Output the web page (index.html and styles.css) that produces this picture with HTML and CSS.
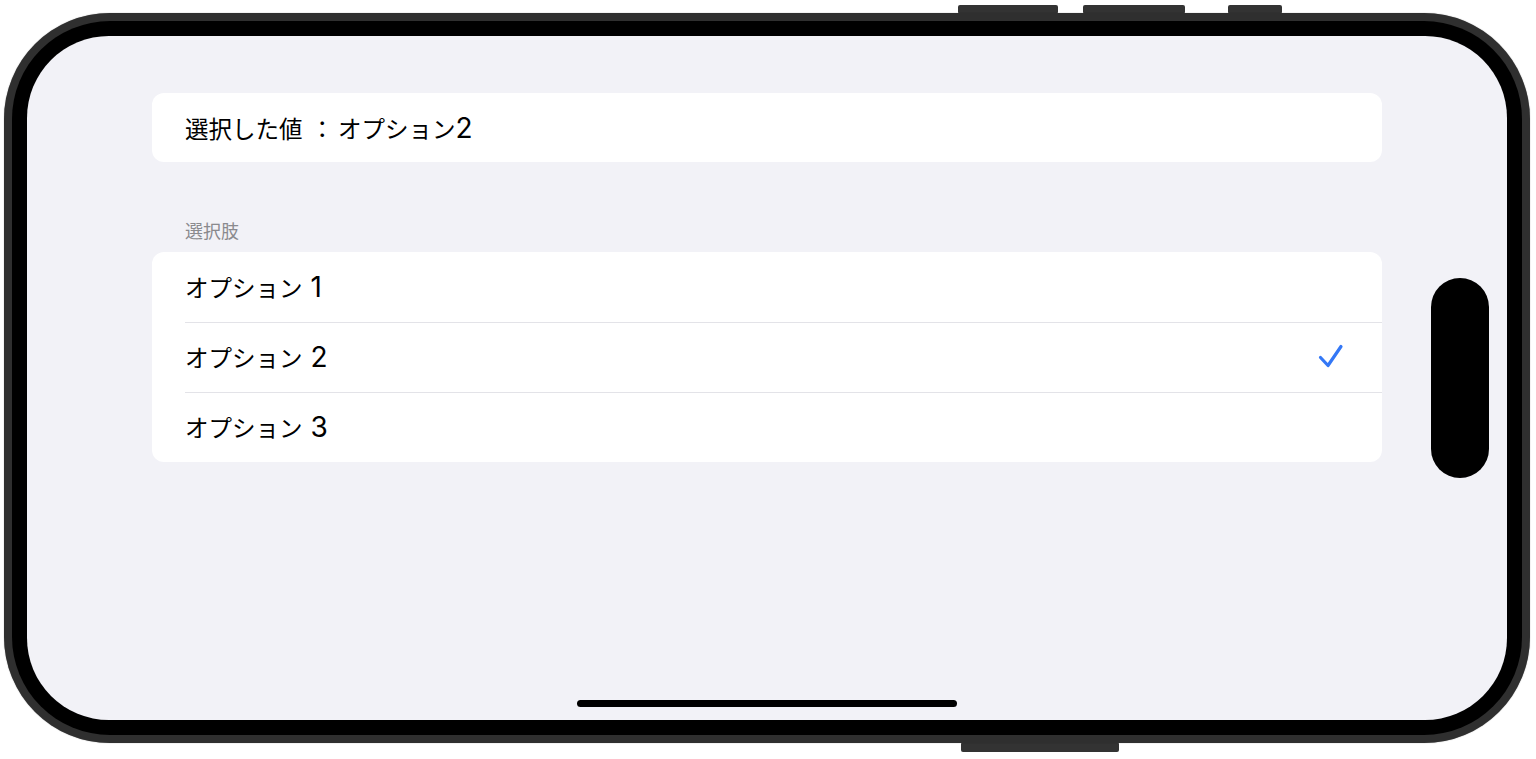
FILE: index.html
```html
<!DOCTYPE html>
<html lang="ja">
<head>
<meta charset="utf-8">
<title>Picker</title>
<link rel="stylesheet" href="styles.css">
</head>
<body>
<div class="device">
  <div class="btn btn-top1"></div>
  <div class="btn btn-top2"></div>
  <div class="btn btn-top3"></div>
  <div class="btn btn-bottom"></div>
  <div class="frame">
    <div class="bezel">
      <div class="screen">
        <div class="content">
          <div class="card single">
            <div class="row"><span class="label">選択した値<span class="colon">：</span>オプション<span class="digit">2</span></span></div>
          </div>
          <div class="section-header">選択肢</div>
          <div class="card list">
            <div class="row item"><span class="label">オプション<span class="digit">1</span></span></div>
            <div class="row item"><span class="label">オプション<span class="digit">2</span></span>
              <svg class="check" width="26" height="26" viewBox="0 0 26 26"><path d="M2.5 13.5 L10 21.5 L23 2.5" fill="none" stroke="#3478f6" stroke-width="3.2" stroke-linecap="round" stroke-linejoin="round"/></svg>
            </div>
            <div class="row item"><span class="label">オプション<span class="digit">3</span></span></div>
          </div>
        </div>
        <div class="island"></div>
        <div class="home-indicator"></div>
      </div>
    </div>
  </div>
</div>
</body>
</html>
```
FILE: styles.css
```css
html, body {
  margin: 0;
  padding: 0;
  background: #ffffff;
  width: 1536px;
  height: 759px;
  overflow: hidden;
  font-family: "Noto Sans CJK JP", "Noto Sans", sans-serif;
}

.device {
  position: relative;
  width: 1526px;
  height: 730px;
  margin: 13px 0 0 4px;
}

.btn {
  position: absolute;
  background: #333333;
  border-radius: 2px;
}
.btn-top1 { left: 954px; top: -8px; width: 100px; height: 9px; }
.btn-top2 { left: 1079px; top: -8px; width: 102px; height: 9px; }
.btn-top3 { left: 1224px; top: -8px; width: 54px; height: 9px; }
.btn-bottom { left: 957px; top: 729px; width: 158px; height: 10px; }

.frame {
  position: relative;
  width: 100%;
  height: 100%;
  box-sizing: border-box;
  padding: 8px;
  background: #2f2f2f;
  border-radius: 106px;
  box-shadow: 0 0 1px rgba(0,0,0,0.5);
}

.bezel {
  width: 100%;
  height: 100%;
  box-sizing: border-box;
  padding: 15px;
  background: #000000;
  border-radius: 98px;
}

.screen {
  position: relative;
  width: 100%;
  height: 100%;
  background: #f2f2f7;
  border-radius: 82px;
  overflow: hidden;
}

.content {
  display: flex;
  flex-direction: column;
  padding: 57px 125px 0 125px;
}

.card {
  background: #ffffff;
  border-radius: 12px;
  overflow: hidden;
}

.row {
  height: 69px;
  display: flex;
  align-items: center;
  padding-left: 33px;
  font-size: 23.5px;
  color: #000000;
}

.label {
  line-height: 30px;
}

.colon {
  margin: 0 4px 0 8px;
}

.digit {
  font-family: Inter, "Noto Sans", sans-serif;
  font-size: 28px;
  line-height: 1;
}

.list .digit {
  margin-left: 8px;
}

.section-header {
  margin: 56px 0 10px 33px;
  height: 24px;
  line-height: 24px;
  font-size: 18px;
  color: #8a8a8e;
}

.list .item {
  position: relative;
  height: 70px;
  justify-content: space-between;
  padding-right: 38px;
}

.list .item + .item::before {
  content: "";
  position: absolute;
  left: 33px;
  right: 0;
  top: 0;
  height: 1px;
  background: #e3e3e8;
}

.check {
  display: block;
}

.island {
  position: absolute;
  right: 18px;
  top: 50%;
  width: 58px;
  height: 200px;
  margin-top: -100px;
  background: #000000;
  border-radius: 29px;
}

.home-indicator {
  position: absolute;
  left: 50%;
  bottom: 13px;
  width: 380px;
  height: 7px;
  margin-left: -190px;
  background: #000000;
  border-radius: 4px;
}
```
